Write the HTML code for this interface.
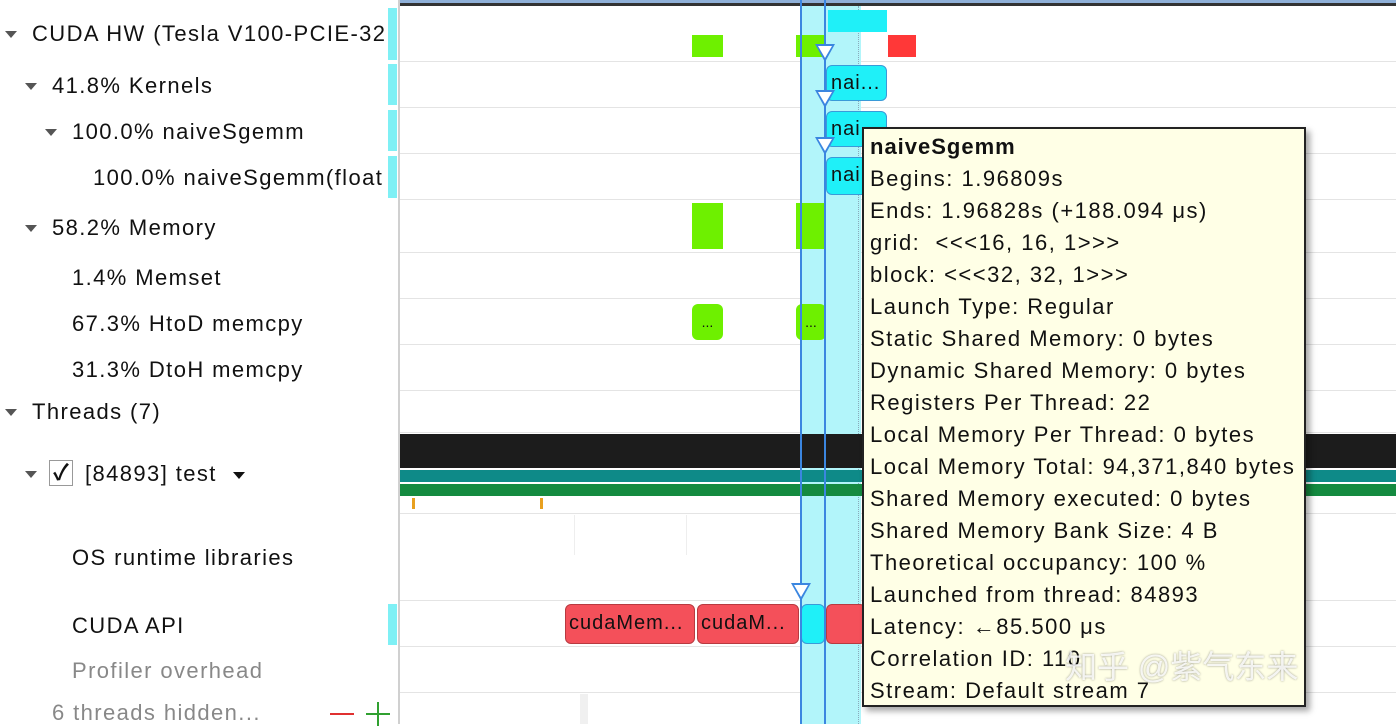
<!DOCTYPE html>
<html><head><meta charset="utf-8"><style>
*{margin:0;padding:0;box-sizing:border-box}
body{width:1396px;height:724px;overflow:hidden;background:#fff;font-family:"Liberation Sans","Noto Sans CJK SC",sans-serif;position:relative;color:#111}
.a{position:absolute}
.t{position:absolute;font-size:22px;white-space:nowrap;line-height:26px;letter-spacing:1.4px}
.sep{position:absolute;left:400px;width:996px;height:1px;background:#e4e4e4}
.tri{position:absolute;width:0;height:0;border-left:6px solid transparent;border-right:6px solid transparent;border-top:7px solid #555}
.cb{position:absolute;background:#7ff0f5}
.g{position:absolute;background:#6ef000}
.k{position:absolute;background:#1ff0f8;border:1.5px solid #3a9ad8;border-radius:6px;font-size:20px;padding-left:4px;overflow:hidden;white-space:nowrap;color:#111;line-height:28px;letter-spacing:1px}
.r{position:absolute;background:#f4505a;border:1.5px solid #b83a40;border-radius:6px;font-size:20px;padding-left:3px;overflow:hidden;white-space:nowrap;line-height:36px;letter-spacing:1px}
.arr{position:absolute;width:0;height:0;border-left:10px solid transparent;border-right:10px solid transparent;border-top:18px solid #3b86e0}
.arr:after{content:"";position:absolute;left:-7px;top:-16px;border-left:7px solid transparent;border-right:7px solid transparent;border-top:12px solid #fff}
#tip{position:absolute;left:862px;top:127px;width:444px;height:580px;background:#ffffe6;border:2px solid #222;box-shadow:4px 4px 6px rgba(0,0,0,.35);padding:2px 0 0 6px}
#tip div{font-size:22px;line-height:32px;white-space:nowrap;color:#111;letter-spacing:1.5px}
</style></head><body>
<div class="a" style="left:399px;top:0;width:997px;height:3px;background:#8fb0d8"></div>
<div class="a" style="left:399px;top:3px;width:997px;height:3px;background:#333"></div>
<div class="a" style="left:398px;top:0;width:2px;height:724px;background:#d0d0d0"></div>
<div class="sep" style="top:61px"></div><div class="sep" style="top:107px"></div><div class="sep" style="top:153px"></div><div class="sep" style="top:199px"></div><div class="sep" style="top:252px"></div><div class="sep" style="top:298px"></div><div class="sep" style="top:344px"></div><div class="sep" style="top:390px"></div><div class="sep" style="top:432px"></div><div class="sep" style="top:513px"></div><div class="sep" style="top:600px"></div><div class="sep" style="top:646px"></div><div class="sep" style="top:692px"></div>
<div class="cb" style="left:388px;top:8px;width:9px;height:52px"></div>
<div class="cb" style="left:388px;top:64px;width:9px;height:41px"></div>
<div class="cb" style="left:388px;top:110px;width:9px;height:41px"></div>
<div class="cb" style="left:388px;top:156px;width:9px;height:42px"></div>
<div class="cb" style="left:388px;top:604px;width:9px;height:41px"></div>
<div class="tri" style="left:5px;top:31px"></div><div class="t" style="left:32px;top:21px;width:354px;overflow:hidden">CUDA HW (Tesla V100-PCIE-32</div>
<div class="tri" style="left:25px;top:83px"></div><div class="t" style="left:52px;top:73px">41.8% Kernels</div>
<div class="tri" style="left:45px;top:129px"></div><div class="t" style="left:72px;top:119px">100.0% naiveSgemm</div>
<div class="t" style="left:93px;top:165px;width:290px;overflow:hidden">100.0% naiveSgemm(float</div>
<div class="tri" style="left:25px;top:225px"></div><div class="t" style="left:52px;top:215px">58.2% Memory</div>
<div class="t" style="left:72px;top:265px">1.4% Memset</div>
<div class="t" style="left:72px;top:311px">67.3% HtoD memcpy</div>
<div class="t" style="left:72px;top:357px">31.3% DtoH memcpy</div>
<div class="tri" style="left:5px;top:409px"></div><div class="t" style="left:32px;top:399px">Threads (7)</div>
<div class="tri" style="left:25px;top:471px"></div>
<div class="a" style="left:49px;top:460px;width:24px;height:26px;border:1px solid #999;background:#fff;font-size:22px;line-height:24px;text-align:center;font-weight:bold">✓</div>
<div class="t" style="left:85px;top:461px">[84893] test</div>
<div class="tri" style="left:233px;top:472px;border-top-color:#111"></div>
<div class="t" style="left:72px;top:545px">OS runtime libraries</div>
<div class="t" style="left:72px;top:613px">CUDA API</div>
<div class="t" style="left:72px;top:658px;color:#888">Profiler overhead</div>
<div class="t" style="left:52px;top:700px;color:#888">6 threads hidden...</div>
<div class="a" style="left:330px;top:713px;width:24px;height:2px;background:#e03030"></div>
<div class="a" style="left:366px;top:713px;width:24px;height:2px;background:#30a030"></div>
<div class="a" style="left:377px;top:702px;width:2px;height:24px;background:#30a030"></div>
<div class="a" style="left:801px;top:6px;width:60px;height:718px;background:#b2f5fa"></div>
<div class="a" style="left:858px;top:6px;width:1px;height:718px;border-left:1px dotted #8ab"></div>
<div class="a" style="left:400px;top:434px;width:996px;height:34px;background:#1c1c1c"></div>
<div class="a" style="left:400px;top:470px;width:996px;height:12px;background:#0e8a88"></div>
<div class="a" style="left:400px;top:484px;width:996px;height:12px;background:#148a40"></div>
<div class="a" style="left:412px;top:498px;width:3px;height:11px;background:#e8a020"></div>
<div class="a" style="left:540px;top:498px;width:3px;height:11px;background:#e8a020"></div>
<div class="a" style="left:574px;top:515px;width:1px;height:40px;background:#eee"></div>
<div class="a" style="left:686px;top:515px;width:1px;height:40px;background:#eee"></div>
<div class="a" style="left:580px;top:694px;width:8px;height:30px;background:#f0f0f0"></div>
<div class="a" style="left:828px;top:10px;width:59px;height:22px;background:#1ff0f8"></div>
<div class="g" style="left:692px;top:35px;width:31px;height:22px"></div>
<div class="g" style="left:796px;top:35px;width:28px;height:22px"></div>
<div class="a" style="left:888px;top:35px;width:28px;height:22px;background:#ff3838"></div>
<div class="g" style="left:692px;top:203px;width:31px;height:46px"></div>
<div class="g" style="left:796px;top:203px;width:28px;height:46px"></div>
<div class="g" style="left:692px;top:304px;width:31px;height:36px;border-radius:6px;font-size:14px;text-align:center;line-height:36px">...</div>
<div class="g" style="left:796px;top:304px;width:30px;height:36px;border-radius:6px;font-size:14px;text-align:center;line-height:36px">...</div>
<div class="k" style="left:826px;top:65px;width:61px;height:36px;line-height:34px">nai...</div>
<div class="k" style="left:826px;top:111px;width:61px;height:36px;line-height:34px">nai...</div>
<div class="k" style="left:826px;top:157px;width:61px;height:38px;line-height:34px">nai</div>
<div class="r" style="left:565px;top:604px;width:130px;height:40px">cudaMem...</div>
<div class="r" style="left:697px;top:604px;width:102px;height:40px">cudaM...</div>
<div class="k" style="left:801px;top:604px;width:24px;height:40px"></div>
<div class="r" style="left:826px;top:604px;width:40px;height:40px"></div>
<div class="a" style="left:800px;top:0;width:2px;height:724px;background:#3b86e0"></div>
<div class="a" style="left:824px;top:0;width:2px;height:724px;background:#3b86e0"></div>
<div class="arr" style="left:815px;top:44px"></div>
<div class="arr" style="left:815px;top:90px"></div>
<div class="arr" style="left:815px;top:137px"></div>
<div class="arr" style="left:791px;top:583px"></div>
<div id="tip">
<div style="font-weight:bold;letter-spacing:1px">naiveSgemm</div>
<div>Begins: 1.96809s</div>
<div>Ends: 1.96828s (+188.094 μs)</div>
<div>grid: &nbsp;&lt;&lt;&lt;16, 16, 1&gt;&gt;&gt;</div>
<div>block: &lt;&lt;&lt;32, 32, 1&gt;&gt;&gt;</div>
<div>Launch Type: Regular</div>
<div>Static Shared Memory: 0 bytes</div>
<div>Dynamic Shared Memory: 0 bytes</div>
<div>Registers Per Thread: 22</div>
<div>Local Memory Per Thread: 0 bytes</div>
<div>Local Memory Total: 94,371,840 bytes</div>
<div>Shared Memory executed: 0 bytes</div>
<div>Shared Memory Bank Size: 4 B</div>
<div>Theoretical occupancy: 100 %</div>
<div>Launched from thread: 84893</div>
<div>Latency: ←85.500 μs</div>
<div>Correlation ID: 110</div>
<div>Stream: Default stream 7</div>
</div>
<div class="a" style="left:1065px;top:642px;font-size:32px;color:rgba(255,255,255,.85);white-space:nowrap;text-shadow:0 0 2px rgba(0,0,0,.4)">知乎 @紫气东来</div>
</body></html>
